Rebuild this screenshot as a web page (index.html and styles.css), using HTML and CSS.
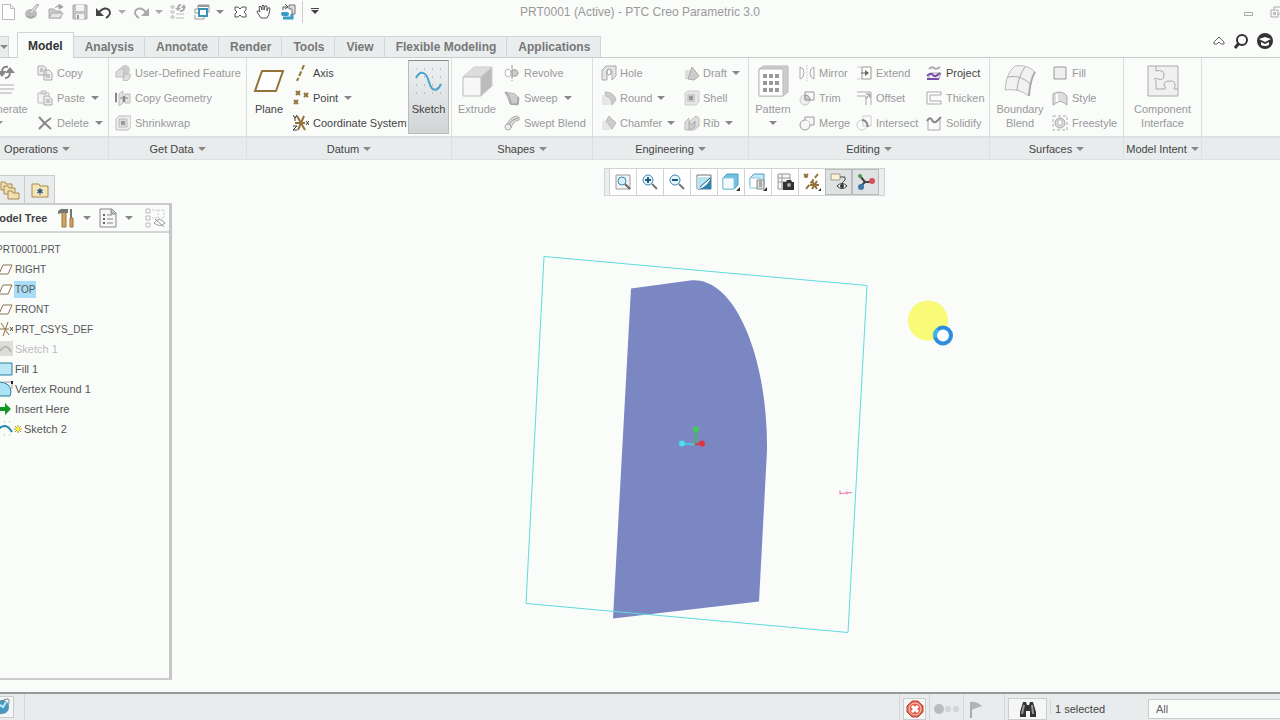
FILE: index.html
```html
<!DOCTYPE html>
<html lang="en">
<head>
    <meta charset="UTF-8">
    <meta name="viewport" content="width=device-width, initial-scale=1.0">
    <title>PRT0001 (Active) - PTC Creo Parametric 3.0</title>
    <link rel="stylesheet" href="styles.css">
</head>
<body>
    <!-- title bar -->
    <header class="titlebar">
        <div class="quick">
            <button aria-label="New"><svg width="16" height="16" viewBox="0 0 16 16"><path d="M2.500 .5h8l4 4v11h-12z" fill="#fff" stroke="#bbb"/><path d="M10.500 .5v4h4" fill="none" stroke="#bbb"/></svg></button>
            <button aria-label="Open last"><svg width="16" height="16" viewBox="0 0 16 16"><ellipse cx="7" cy="10" rx="6" ry="5" fill="#bbb"/><path d="M5 9l8-9 2 1-7 9z" fill="#ddd" stroke="#aaa"/><path d="M3 12q3 3 7 0" fill="none" stroke="#999"/></svg></button>
            <button aria-label="Open"><svg width="16" height="16" viewBox="0 0 16 16"><path d="M1 14V5h5l1 2h6v7z" fill="#ccc" stroke="#aaa"/><path d="M1 14l3-5h11l-3 5z" fill="#e4e4e4" stroke="#aaa"/><path d="M7 4q2-3 5-2M11 0l4 3-4 2z" fill="#999" stroke="#aaa"/></svg></button>
            <button aria-label="Save"><svg width="16" height="16" viewBox="0 0 16 16"><path d="M1 1h14v14H1z" fill="#c4c4c4" stroke="#aaa"/><path d="M4 1h8v6H4zM4 10h8v5H4z" fill="#f4f4f4"/><path d="M5 11h2v4H5z" fill="#999"/></svg></button>
            <button class="undo" aria-label="Undo"><svg width="16" height="16" viewBox="0 0 16 16"><path d="M3 8q6-6 10-2 3 4-3 8" fill="none" stroke="#444" stroke-width="2"/><path d="M0 4v8h8z" fill="#444"/></svg><i class="caret light"></i></button>
            <button class="undo" aria-label="Redo"><svg width="16" height="16" viewBox="0 0 16 16"><path d="M13 8Q7 2 3 6q-3 4 3 8" fill="none" stroke="#aaa" stroke-width="2"/><path d="M16 4v8H8z" fill="#aaa"/></svg><i class="caret light"></i></button>
            <button aria-label="Regenerate model"><svg width="16" height="16" viewBox="0 0 16 16"><path d="M1 2h3v2H1zM1 7h3v2H1zM1 12h3v2H1z" fill="none" stroke="#bbb"/><path d="M6 10h8M6 14h8" stroke="#bbb"/><path d="M11 1Q8 1 8 4M10 7q4 0 4-3" fill="none" stroke="#aaa" stroke-width="2"/><path d="M5 4h6L8 7zM11 4h5l-2-4z" fill="#aaa"/></svg></button>
            <button class="undo" aria-label="Windows"><svg width="16" height="16" viewBox="0 0 16 16"><path d="M1 5h3V1h11v7h-2M1 5v4h3M1 11v4h9v-2" fill="#fff" stroke="#999"/><path d="M4 2h11" stroke="#999" stroke-width="2"/><path d="M5 5h8v7H5z" fill="#fff" stroke="#3a92b8" stroke-width="2"/></svg><i class="caret"></i></button>
            <button class="wide" aria-label="Close"><svg width="16" height="16" viewBox="0 0 16 16"><path d="M3 3h3l2 2 2-2h4v3l-2 2 2 2v3h-4l-2-2-2 2H3v-3l2-2-2-2z" fill="#fff" stroke="#555"/></svg></button>
            <button class="wide" aria-label="Pan"><svg width="16" height="16" viewBox="0 0 16 16"><path d="M5 14L1 8q0-2 2-1l1 1-1-5q1-2 2 0l1 3V2q1-2 2 0v4l1-4q2-1 2 1v4l1-3q2-1 2 1-1 7-3 9z" fill="#fff" stroke="#555"/></svg></button>
            <button aria-label="Switch window"><svg width="16" height="16" viewBox="0 0 16 16"><path d="M9 1h6v9h-3V5H9z" fill="#ddd" stroke="#777"/><path d="M3 6V3h4M5 0l3 3-3 2" fill="none" stroke="#555"/><rect x="1" y="8" width="8" height="4" rx="2" fill="#3a9cc4"/><path d="M3 14h9v-4" fill="none" stroke="#3a9cc4" stroke-width="3"/></svg></button>
            <button class="more" aria-label="Customize toolbar"><i class="caret dark"></i></button>
        </div>
        <h1>PRT0001 (Active) - PTC Creo Parametric 3.0</h1>
        <div class="window-buttons">
            <button aria-label="Minimize"><svg width="10" height="12" viewBox="0 0 10 12"><path d="M.5 6.500h8v3h-8z" fill="none" stroke="#aaa"/></svg></button>
            <button aria-label="Restore"><svg width="12" height="12" viewBox="0 0 12 12"><path d="M4 4V1h8v7H8" fill="none" stroke="#aaa"/><path d="M1 4h7v7H1zM3.500 6.500h2v2h-2z" fill="none" stroke="#aaa"/></svg></button>
        </div>
    </header>

    <!-- ribbon tabs -->
    <nav class="tabs">
        <button class="file" aria-label="File"><i class="caret"></i></button>
        <button class="active">Model</button>
        <button>Analysis</button>
        <button>Annotate</button>
        <button>Render</button>
        <button>Tools</button>
        <button>View</button>
        <button>Flexible Modeling</button>
        <button>Applications</button>
        <div class="help">
            <button aria-label="Collapse ribbon"><svg width="12" height="10" viewBox="0 0 12 10"><path d="M1 6l5-5 5 5v2H8L6 6 4 8H1z" fill="#fff" stroke="#666"/></svg></button>
            <button aria-label="Search"><svg width="16" height="16" viewBox="0 0 16 16"><circle cx="9" cy="7" r="5" fill="none" stroke="#333" stroke-width="2"/><path d="M6 10l-4 5" stroke="#333" stroke-width="3"/></svg></button>
            <button aria-label="Learning"><svg width="16" height="16" viewBox="0 0 16 16"><circle cx="8" cy="8" r="8" fill="#333"/><path d="M2 6l6-2 6 2-6 3zM4 9l4 2 4-2v3q-4 2-8 0z" fill="#fff"/></svg></button>
        </div>
    </nav>

    <!-- ribbon -->
    <section class="ribbon">
        <div class="group operations">
            <div class="body">
                <button class="big off"><svg width="32" height="32" viewBox="0 0 32 32"><path d="M25 2q-6-1-6 5M22 13q5 0 5-6" fill="none" stroke="#888" stroke-width="2"/><path d="M14 6h10l-5 6zM22 8h10l-5-6z" fill="#888"/><path d="M4 20h27M4 24h27M4 28h25" stroke="#aaa"/></svg><span>Regenerate</span><i class="caret"></i></button>
                <div class="col">
                    <button class="off"><svg width="16" height="16" viewBox="0 0 16 16"><path d="M1 1h6l2 2v7H1zM7 5h5l3 3v7H7z" fill="#eee" stroke="#aaa"/><path d="M3 4h3M3 6h3M9 10h4M9 12h4" stroke="#999"/></svg>Copy</button>
                    <button class="off"><svg width="16" height="16" viewBox="0 0 16 16"><path d="M1 3h11v10H1zM4 1h5v3H4z" fill="#f4f4f4" stroke="#bbb"/><path d="M7 6h5l3 3v6H7z" fill="#eee" stroke="#aaa"/><path d="M9 10h4M9 12h4" stroke="#999"/></svg>Paste<i class="caret"></i></button>
                    <button class="off"><svg width="16" height="16" viewBox="0 0 16 16"><path d="M2 2q5 6 12 12M14 3Q8 7 2 14" fill="none" stroke="#888" stroke-width="2"/></svg>Delete<i class="caret"></i></button>
                </div>
            </div>
            <button class="foot">Operations<i class="caret"></i></button>
        </div>

        <div class="group getdata">
            <div class="body">
                <div class="col">
                    <button class="off"><svg width="16" height="16" viewBox="0 0 16 16"><circle cx="10" cy="5" r="5" fill="#ccc"/><path d="M1 7l3-3h5v8H1zM9 9h6v4l-3 3H8z" fill="#ddd" stroke="#bbb"/></svg>User-Defined Feature</button>
                    <button class="off"><svg width="16" height="16" viewBox="0 0 16 16"><path d="M1 2v11M4 4l4-3v12l-4 3zM10 4h5v9h-5z" fill="#e4e4e4" stroke="#bbb"/><path d="M1 3v9M9 6v6" stroke="#888" stroke-width="2"/><path d="M5 8h8" stroke="#888"/></svg>Copy Geometry</button>
                    <button class="off"><svg width="16" height="16" viewBox="0 0 16 16"><path d="M1 4l3-3h12v11l-3 3H1z" fill="#eee" stroke="#bbb"/><path d="M4 4h8v8H4z" fill="#ddd" stroke="#bbb"/><path d="M6 6h4v4H6z" fill="#999"/></svg>Shrinkwrap</button>
                </div>
            </div>
            <button class="foot">Get Data<i class="caret"></i></button>
        </div>

        <div class="group datum">
            <div class="body">
                <button class="big"><svg width="32" height="32" viewBox="0 0 32 32"><path d="M9 6h21l-7 20H2z" fill="#fff" stroke="#94733a" stroke-width="2"/></svg><span>Plane</span></button>
                <div class="col">
                    <button><svg width="16" height="16" viewBox="0 0 16 16"><path d="M11 0L4 16" stroke="#94733a" stroke-width="2" stroke-dasharray="5 2"/></svg>Axis</button>
                    <button><svg width="16" height="16" viewBox="0 0 16 16"><path d="M3 1l4 4M7 1L3 5M11 3l4 4M15 3l-4 4M1 10l4 4M5 10l-4 4" stroke="#94733a" stroke-width="2"/></svg>Point<i class="caret"></i></button>
                    <button><svg width="16" height="16" viewBox="0 0 16 16"><path d="M4 1l8 14M11 1L5 15M2 8h10" stroke="#94733a" stroke-width="2"/><path d="M0 0l2 3 2-3M2 3v3M0 11h4l-4 4h4M13 6l3 4M16 6l-3 4" fill="none" stroke="#333"/></svg>Coordinate System</button>
                </div>
                <button class="big pressed"><svg width="32" height="32" viewBox="0 0 32 32"><path d="M3 4h28M3 12h28M3 20h28M3 28h28" stroke="#999" stroke-dasharray="1 7"/><path d="M3 13C7 5 13 6 16 17S25 26 28 19" fill="none" stroke="#49a3cb" stroke-width="2"/></svg><span>Sketch</span></button>
            </div>
            <button class="foot">Datum<i class="caret"></i></button>
        </div>

        <div class="group shapes">
            <div class="body">
                <button class="big off"><svg width="32" height="32" viewBox="0 0 32 32"><path d="M2 12L13 2h18L20 12z" fill="#ddd" stroke="#ccc"/><path d="M20 12L31 2v19L20 31z" fill="#bbb" stroke="#ccc"/><path d="M2 12h18v19H2z" fill="#f7f7f7" stroke="#bbb"/></svg><span>Extrude</span></button>
                <div class="col">
                    <button class="off"><svg width="16" height="16" viewBox="0 0 16 16"><path d="M8 0v16" stroke="#999" stroke-dasharray="4 1"/><ellipse cx="4" cy="8" rx="3" ry="4" fill="none" stroke="#bbb"/><path d="M8 5q6-1 6 3t-6 3z" fill="#ccc" stroke="#999"/></svg>Revolve</button>
                    <button class="off"><svg width="16" height="16" viewBox="0 0 16 16"><path d="M1 2l10 2 4 4-1 7-8-1-2-6z" fill="#ddd" stroke="#aaa"/><path d="M1 2q5 3 6 12h7V7" fill="#ccc" stroke="#999"/></svg>Sweep<i class="caret"></i></button>
                    <button class="off"><svg width="16" height="16" viewBox="0 0 16 16"><path d="M2 11Q5 3 12 1q4 0 3 4-6 1-8 8-3 3-5-2z" fill="#ddd" stroke="#aaa"/><ellipse cx="4" cy="12" rx="3" ry="3" fill="#eee" stroke="#aaa"/><path d="M5 9q3-5 9-6" fill="none" stroke="#999"/></svg>Swept Blend</button>
                </div>
            </div>
            <button class="foot">Shapes<i class="caret"></i></button>
        </div>

        <div class="group engineering">
            <div class="body">
                <div class="col">
                    <button class="off"><svg width="16" height="16" viewBox="0 0 16 16"><path d="M1 5l4-4h10v10l-4 4V6q-3-3-5 0v9H1z" fill="#e4e4e4" stroke="#aaa"/><ellipse cx="8" cy="7" rx="2" ry="3" fill="#fff" stroke="#999"/></svg>Hole</button>
                    <button class="off"><svg width="16" height="16" viewBox="0 0 16 16"><path d="M1 5h6q6 2 6 9l-6 1H1z" fill="#e6e6e6"/><path d="M4 2q9 0 11 8l-4 5q0-8-6-9z" fill="#ccc" stroke="#bbb"/></svg>Round<i class="caret"></i></button>
                    <button class="off"><svg width="16" height="16" viewBox="0 0 16 16"><path d="M1 6h5l5 6v3H1z" fill="#e6e6e6"/><path d="M8 1l7 7-4 6-6-8z" fill="#ccc" stroke="#bbb"/></svg>Chamfer<i class="caret"></i></button>
                </div>
                <div class="col">
                    <button class="off"><svg width="16" height="16" viewBox="0 0 16 16"><path d="M1 5h6v9H1z" fill="#ddd"/><path d="M4 14l4-12 7 9-5 4z" fill="#ccc" stroke="#aaa"/></svg>Draft<i class="caret"></i></button>
                    <button class="off"><svg width="16" height="16" viewBox="0 0 16 16"><path d="M1 3l3-2h11v11l-3 3H1z" fill="#e6e6e6" stroke="#ccc"/><path d="M4 5h6v6H4z" fill="#999" stroke="#ccc" stroke-width="2"/></svg>Shell</button>
                    <button class="off"><svg width="16" height="16" viewBox="0 0 16 16"><path d="M1 7l4-4v4l7-6 3 2v8l-5 4H1z" fill="#ddd" stroke="#bbb"/><path d="M5 7q3 5 6-1v6l-6 3z" fill="#ccc" stroke="#aaa"/></svg>Rib<i class="caret"></i></button>
                </div>
            </div>
            <button class="foot">Engineering<i class="caret"></i></button>
        </div>

        <div class="group editing">
            <div class="body">
                <button class="big off"><svg width="32" height="32" viewBox="0 0 32 32"><path d="M2 4l4-3h25v26l-5 4H2z" fill="#ccc" stroke="#bbb"/><path d="M2 4h24v27H2z" fill="#fff" stroke="#bbb"/><path d="M6 11h16M6 18h16M6 25h16" stroke="#999" stroke-width="4" stroke-dasharray="4 2"/></svg><span>Pattern</span><i class="caret"></i></button>
                <div class="col">
                    <button class="off"><svg width="16" height="16" viewBox="0 0 16 16"><path d="M8 0v16" stroke="#ccc" stroke-dasharray="2 1"/><path d="M1 2q4 1 4 6t-4 6zM15 2q-4 1-4 6t4 6z" fill="none" stroke="#aaa"/></svg>Mirror</button>
                    <button class="off"><svg width="16" height="16" viewBox="0 0 16 16"><circle cx="6" cy="10" r="5" fill="#eee" stroke="#ccc"/><path d="M6 2h9v8H6z" fill="none" stroke="#999"/><path d="M6 5q5 0 5 5H6z" fill="#ccc" stroke="#999"/></svg>Trim</button>
                    <button class="off"><svg width="16" height="16" viewBox="0 0 16 16"><path d="M6 5V2h9v8h-4A5 5 0 1 1 6 5z" fill="#f7f7f7" stroke="#999"/><path d="M6 5q5 0 5 5" fill="none" stroke="#ccc"/></svg>Merge</button>
                </div>
                <div class="col">
                    <button class="off"><svg width="16" height="16" viewBox="0 0 16 16"><path d="M1 2h5M1 14h5" stroke="#ccc"/><path d="M6 2h9v12H6z" fill="none" stroke="#999"/><path d="M5 8h4" stroke="#666"/><path d="M9 5l4 3-4 3z" fill="#666"/></svg>Extend</button>
                    <button class="off"><svg width="16" height="16" viewBox="0 0 16 16"><path d="M1 2h14v13M1 6h9v9" fill="none" stroke="#aaa"/><path d="M10 9l3-4M10 4h4v4" fill="none" stroke="#888"/></svg>Offset</button>
                    <button class="off"><svg width="16" height="16" viewBox="0 0 16 16"><path d="M7 1h8v10H7z" fill="none" stroke="#ccc"/><circle cx="6" cy="10" r="5" fill="none" stroke="#ccc"/><path d="M6 5q5 0 6 7" fill="none" stroke="#888" stroke-width="2"/></svg>Intersect</button>
                </div>
                <div class="col">
                    <button><svg width="16" height="16" viewBox="0 0 16 16"><path d="M3 4q3-3 5-1t6-1" fill="none" stroke="#aaa" stroke-width="2"/><path d="M2 14l3-6h10l-2 6z" fill="#f1edf7" stroke="#aaa"/><path d="M1 11q4-4 6-1t7-2M1 14h12" fill="none" stroke="#7650a8" stroke-width="2"/></svg>Project</button>
                    <button class="off"><svg width="16" height="16" viewBox="0 0 16 16"><path d="M15 2H1v12h14v-3H4V5h11z" fill="#fff" stroke="#aaa"/></svg>Thicken</button>
                    <button class="off"><svg width="16" height="16" viewBox="0 0 16 16"><path d="M2 6v9h12V4" fill="none" stroke="#aaa"/><path d="M1 6q3-5 5-1t5 1l4-4" fill="none" stroke="#888" stroke-width="2"/></svg>Solidify</button>
                </div>
            </div>
            <button class="foot">Editing<i class="caret"></i></button>
        </div>

        <div class="group surfaces">
            <div class="body">
                <button class="big off"><svg width="32" height="32" viewBox="0 0 32 32"><path d="M11 1q12-2 20 6-5 8-6 24-10-8-24-6Q2 8 11 1z" fill="#f1f1f1" stroke="#bbb"/><path d="M21 2q-7 10-8 23M4 12q13-3 23 8" fill="none" stroke="#aaa"/><path d="M31 7q-5 8-6 24" fill="none" stroke="#aaa" stroke-width="2"/></svg><span>Boundary<br>Blend</span></button>
                <div class="col">
                    <button class="off"><svg width="16" height="16" viewBox="0 0 16 16"><path d="M2 2h12v12H2z" fill="#eee" stroke="#999"/></svg>Fill</button>
                    <button class="off"><svg width="16" height="16" viewBox="0 0 16 16"><path d="M1 4q6-4 12 0l2 2v9q-6-5-9-3t-5 3z" fill="#ddd" stroke="#aaa"/><path d="M5 4v8" stroke="#fff" stroke-width="2"/></svg>Style</button>
                    <button class="off"><svg width="16" height="16" viewBox="0 0 16 16"><path d="M1 1h14v14H1z" fill="none" stroke="#aaa" stroke-dasharray="3 2"/><circle cx="8" cy="8" r="5" fill="#ddd" stroke="#aaa"/><path d="M6 5h4v5H6z" fill="#fff" stroke="#bbb"/></svg>Freestyle</button>
                </div>
            </div>
            <button class="foot">Surfaces<i class="caret"></i></button>
        </div>

        <div class="group intent">
            <div class="body">
                <button class="big off"><svg width="32" height="32" viewBox="0 0 32 32"><path d="M1 1h30v30H1z" fill="#f0f0f0" stroke="#aaa"/><path d="M9 1v5q8-2 8 4t-6 4-2 2v8h9q1-2-1-4 0-4 6-4t5 5l-1 3h4" fill="none" stroke="#aaa"/></svg><span>Component<br>Interface</span></button>
            </div>
            <button class="foot">Model Intent<i class="caret"></i></button>
        </div>
        <div class="rest"></div>
    </section>

    <main>
        <aside>
            <div class="side-tabs">
                <button aria-label="Folder browser"><svg width="20" height="20" viewBox="0 0 20 20"><g fill="#f2dfae" stroke="#a88a54"><path d="M1 10V2h4l1 2h6v6z"/><path d="M4 14V6h4l1 2h6v6z"/><path d="M8 19v-8h4l1 2h6v6z"/></g></svg></button>
                <button aria-label="Favorites"><svg width="20" height="20" viewBox="0 0 20 20"><path d="M2 17V4h7l1 2h8v11z" fill="#f7e5b8" stroke="#a88a54"/><path d="M10 8v7M7 10l6 3M13 10l-6 3" stroke="#27618a"/><circle cx="10" cy="11" r="2" fill="#27618a"/></svg></button>
            </div>
            <div class="panel">
                <div class="panel-head">
                    <h2>Model Tree</h2>
                    <button aria-label="Settings"><svg width="18" height="20" viewBox="0 0 18 20"><path d="M5 4h4v15H5z" fill="#d3a75f" stroke="#997440"/><path d="M1 3q3-3 6-2h4v4H5L1 6z" fill="#777"/><path d="M14 1v9" stroke="#777" stroke-width="2"/><path d="M13 10h3v9h-3z" fill="#d3a75f" stroke="#997440"/></svg><i class="caret"></i></button>
                    <button aria-label="Show"><svg width="18" height="20" viewBox="0 0 18 20"><path d="M1 1h12l4 4v14H1z" fill="#f5f6f6" stroke="#888"/><path d="M12 1v5h5" fill="#bbb" stroke="#888"/><path d="M4 7h2M4 11h2M4 15h2" stroke="#666" stroke-width="2"/><path d="M8 7h5M8 11h6M8 15h6" stroke="#888"/></svg><i class="caret"></i></button>
                    <button class="hide-btn" aria-label="Hide items"><svg width="20" height="20" viewBox="0 0 20 20"><path d="M1 1h4v4H1zM1 8h4v4H1zM1 15h4v4H1z" fill="none" stroke="#bbb"/><path d="M7 2h12v8H7M13 2v8" fill="none" stroke="#ccc" stroke-dasharray="2 1"/><path d="M9 15q5-7 11 0-5 5-11 0zM10 11l9 8" fill="none" stroke="#999"/></svg></button>
                </div>
                <ul class="tree">
                    <li class="root datum-name"><span>PRT0001.PRT</span></li>
                    <li class="datum-name"><svg width="16" height="16" viewBox="0 0 16 16"><path d="M6 4h9l-4 9H2z" fill="#fff" stroke="#86744f"/></svg><span>RIGHT</span></li>
                    <li class="datum-name"><svg width="16" height="16" viewBox="0 0 16 16"><path d="M6 4h9l-4 9H2z" fill="#fff" stroke="#86744f"/></svg><span class="selected">TOP</span></li>
                    <li class="datum-name"><svg width="16" height="16" viewBox="0 0 16 16"><path d="M6 4h9l-4 9H2z" fill="#fff" stroke="#86744f"/></svg><span>FRONT</span></li>
                    <li class="datum-name"><svg width="16" height="16" viewBox="0 0 16 16"><path d="M4 2l8 12M11 1L6 15M2 8h10" stroke="#94733a"/><path d="M13 6l3 4M16 6l-3 4" stroke="#444"/></svg><span>PRT_CSYS_DEF</span></li>
                    <li class="hidden-item"><svg width="16" height="16" viewBox="0 0 16 16"><path d="M0 0h16v15H0z" fill="#dddeda"/><path d="M3 10q6-9 11 1" fill="none" stroke="#b7b7ad" stroke-width="2"/></svg><span>Sketch 1</span></li>
                    <li><svg width="16" height="16" viewBox="0 0 16 16"><path d="M2 2h13v12H2z" fill="#bde7f5" stroke="#267c9c"/></svg><span>Fill 1</span></li>
                    <li><svg width="16" height="16" viewBox="0 0 16 16"><path d="M1 1h2q11 1 11 10l-1 4H1z" fill="#a9e3f4" stroke="#247b9b"/><path d="M7 1h8v7" fill="none" stroke="#999"/><path d="M15 0v3" stroke="#222" stroke-width="2"/></svg><span>Vertex Round 1</span></li>
                    <li><svg width="16" height="16" viewBox="0 0 16 16"><path d="M1 6h7V2l6 6-6 6v-4H1z" fill="#159522"/></svg><span>Insert Here</span></li>
                    <li><svg width="16" height="16" viewBox="0 0 16 16"><path d="M2 1h14M2 6h14M2 14h14" stroke="#aaa" stroke-dasharray="1 4"/><path d="M1 9q7-9 14 2" fill="none" stroke="#278cab" stroke-width="2"/></svg><svg width="8" height="8" viewBox="0 0 8 8"><path d="M4 0v8M0 4h8M1 1l6 6M7 1L1 7" stroke="#a49b20"/><circle cx="4" cy="4" r="2" fill="#f6f13a"/></svg><span>Sketch 2</span></li>
                </ul>
            </div>
        </aside>

        <section class="viewport">
            <div class="view-tools">
                <button aria-label="Refit"><svg width="18" height="18" viewBox="0 0 18 18"><path d="M2 2h14v14H2z" fill="#f5f5f5" stroke="#999"/><circle cx="8" cy="8" r="4" fill="#d8effa" stroke="#398bb1"/><path d="M11 11l5 5" stroke="#666" stroke-width="2"/></svg></button>
                <button aria-label="Zoom in"><svg width="18" height="18" viewBox="0 0 18 18"><circle cx="7" cy="7" r="5" fill="#e3f4fb" stroke="#398bb1"/><path d="M4 7h6M7 4v6" stroke="#255b78" stroke-width="2"/><path d="M11 11l5 5" stroke="#777" stroke-width="2"/></svg></button>
                <button aria-label="Zoom out"><svg width="18" height="18" viewBox="0 0 18 18"><circle cx="7" cy="7" r="5" fill="#e3f4fb" stroke="#398bb1"/><path d="M4 7h6" stroke="#255b78" stroke-width="2"/><path d="M11 11l5 5" stroke="#777" stroke-width="2"/></svg></button>
                <button aria-label="Repaint"><svg width="18" height="18" viewBox="0 0 18 18"><path d="M2 2h14v14H2z" fill="#fff" stroke="#777"/><path d="M2 4h14L4 16H2z" fill="#bce3f3"/><path d="M16 3v13H4q10-3 12-13z" fill="#2c83ad"/><path d="M5 14l10-9" stroke="#265e7c"/></svg></button>
                <button aria-label="Display style"><svg width="18" height="18" viewBox="0 0 18 18"><path d="M1 5l4-4h11v11l-4 4H1z" fill="#71c1df" stroke="#4a9fbe"/><path d="M1 5h11v11H1z" fill="#f3fbfe" stroke="#8cc7dc"/><path d="M18 14v4h-4z" fill="#333"/></svg></button>
                <button aria-label="Saved orientations"><svg width="18" height="18" viewBox="0 0 18 18"><path d="M1 5l4-4h10v11H1z" fill="#c6e9f5" stroke="#4a9fbe"/><path d="M1 5h10v10H1z" fill="#fff" stroke="#8cc7dc"/><path d="M8 7h7v9H8z" fill="#ddd" stroke="#888"/><path d="M10 9h3M10 11h3M10 13h3" stroke="#777"/><path d="M18 14v4h-4z" fill="#333"/></svg></button>
                <button aria-label="View manager"><svg width="18" height="18" viewBox="0 0 18 18"><path d="M2 1h12v15H2zM2 5h12M2 9h8M6 1v15" fill="#f5f5f5" stroke="#999"/><path d="M7 9h3l1-2h4l1 2h2v8H7z" fill="#333"/><circle cx="13" cy="12" r="2" fill="#aaa"/></svg></button>
                <button aria-label="Datum display"><svg width="18" height="18" viewBox="0 0 18 18"><path d="M1 1l4 4M5 1L1 5M15 1L3 16" stroke="#94733a" stroke-width="2" stroke-dasharray="5 2"/><path d="M9 8l5 8M14 8l-5 8M7 12h9" stroke="#94733a" stroke-width="2"/><path d="M18 15v3h-3z" fill="#333"/></svg></button>
                <button class="on" aria-label="Annotation display"><svg width="18" height="18" viewBox="0 0 18 18"><path d="M1 1h9v6H1z" fill="#fff4d1" stroke="#999"/><path d="M10 4h5v3l-3 3" fill="none" stroke="#444"/><path d="M7 13q5-5 10 0-5 5-10 0z" fill="#fff" stroke="#333"/><circle cx="12" cy="13" r="2" fill="#333"/></svg></button>
                <button class="on" aria-label="Spin center"><svg width="18" height="18" viewBox="0 0 18 18"><path d="M8 9L3 3M8 9h7M8 9l-5 5" stroke="#444" stroke-width="2"/><circle cx="3" cy="3" r="2" fill="#4c9c4e"/><circle cx="15" cy="8" r="3" fill="#d35355"/><circle cx="4" cy="14" r="3" fill="#397ca5"/></svg></button>
            </div>
            <svg class="model" viewBox="172 200 1108 490">
                <path d="M631 288L690 280C736 275 768 360 767 450L759 601L613 618z" fill="#7b87c2"/>
                <path d="M544 256L867 285L848 632L526 603z" fill="none" stroke="#5fdbe0"/>
                <path d="M695 444l-13-1" stroke="#48c8e8" stroke-width="2"/>
                <path d="M695 444l1-14" stroke="#43b65c" stroke-width="2"/>
                <path d="M695 444l7-1" stroke="#d53743" stroke-width="2"/>
                <circle cx="682" cy="443" r="3" fill="#48dff2"/>
                <circle cx="696" cy="429" r="3" fill="#46c85b"/>
                <circle cx="702" cy="443" r="3" fill="#e23242"/>
                <path d="M840 490v4M840 493l12-1M847 491v3" stroke="#e574b2"/>
                <circle cx="928" cy="320" r="20" fill="#f9fa78"/>
                <circle cx="943" cy="335" r="8" fill="#fff" stroke="#2f8ddd" stroke-width="4"/>
                <path d="M935 337a8 8 0 0 1 3-8" fill="none" stroke="#3fb9e8" stroke-width="4"/>
            </svg>
        </section>
    </main>

    <footer class="status">
        <button class="web" aria-label="Browser"><svg width="18" height="18" viewBox="0 0 18 18"><circle cx="9" cy="9" r="7" fill="#3a9ccb"/><path d="M4 12l3-5 3 2 3-5" fill="none" stroke="#bfe6f6" stroke-width="2"/><ellipse cx="9" cy="9" rx="10" ry="4" transform="rotate(-50 9 9)" fill="none" stroke="#888"/></svg></button>
        <div class="message"></div>
        <div class="cell"><button class="stop" aria-label="Stop"><svg width="18" height="18" viewBox="0 0 18 18"><path d="M6 1h6l5 5v6l-5 5H6l-5-5V6z" fill="#e2604c" stroke="#b54638"/><circle cx="9" cy="9" r="6" fill="none" stroke="#fbd3ca"/><path d="M6 6l6 6M12 6l-6 6" stroke="#fff" stroke-width="3"/></svg></button></div>
        <div class="cell lights"><svg width="26" height="12" viewBox="0 0 26 12"><circle cx="6" cy="6" r="5" fill="#b9bcbc"/><circle cx="15" cy="6" r="3" fill="#d2d5d5"/><circle cx="23" cy="6" r="3" fill="#d2d5d5"/></svg></div>
        <div class="cell flag"><svg width="14" height="18" viewBox="0 0 14 18"><path d="M2 2v16" stroke="#aaa" stroke-width="2"/><path d="M2 2q5-1 11 4L2 10z" fill="#b2b5b5"/></svg></div>
        <div class="cell"><button class="find" aria-label="Find"><svg width="18" height="16" viewBox="0 0 18 16"><path d="M4 1h3l1 3h2l1-3h3l3 10v5h-6v-6H7v6H1v-5z" fill="#333"/><path d="M5 4L3 13M13 4l1 9" stroke="#999" stroke-width="2"/></svg></button></div>
        <span class="count">1 selected</span>
        <select aria-label="Selection filter"><option>All</option></select>
    </footer>
</body>
</html>
```
FILE: styles.css
```css
* { box-sizing: border-box; }
body { margin: 0; height: 100vh; display: flex; flex-direction: column; overflow: hidden; background: #fafcfa; color: #444; font-family: "Liberation Sans", Arial, sans-serif; font-size: 11px; }
button { padding: 0; border: none; background: none; color: inherit; font: inherit; cursor: pointer; }
svg { flex: none; display: block; }
h1, h2, ul { margin: 0; padding: 0; }
.caret { flex: none; border: 4px solid transparent; border-top-color: #888; border-bottom: none; }
.caret.light { border-top-color: #aaa; }
.caret.dark { border-top-color: #444; }

/* title bar */
.titlebar { flex: none; height: 24px; display: grid; grid-template-columns: 1fr auto 1fr; align-items: center; }
.titlebar h1 { font-size: 12px; font-weight: normal; color: #999; }
.quick, .window-buttons { display: flex; align-items: center; }
.quick button { width: 24px; height: 22px; display: flex; align-items: center; }
.quick .undo { width: 37px; gap: 6px; }
.quick .undo:nth-child(8) { width: 38px; }
.quick .more { border-left: 1px solid #ccc; padding-left: 8px; margin-left: -2px; }
.more .caret { position: relative; }
.more .caret::before { content: ""; position: absolute; left: -4px; top: -6px; width: 8px; height: 1px; background: #444; }
.window-buttons { justify-content: flex-end; gap: 16px; overflow: hidden; }
.window-buttons button:last-child { margin-right: -2px; }

/* ribbon tabs */
.tabs { flex: none; height: 34px; display: flex; align-items: flex-end; border-bottom: 1px solid #ccc; }
.tabs > button { height: 21px; padding: 0 10px 0 11px; border: 1px solid #d2d5d5; border-width: 1px 1px 0 0; background: #eaeded; color: #777; font-size: 12px; font-weight: bold; }
.tabs > .active { height: 26px; margin-bottom: -1px; padding: 0 10px; border-left-width: 1px; background: #fafcfa; color: #333; }
.tabs > .file { width: 9px; margin-right: 8px; padding: 0; display: flex; justify-content: center; align-items: center; overflow: hidden; }
.help { align-self: flex-start; display: flex; align-items: center; gap: 8px; height: 33px; margin-left: auto; padding-right: 7px; }

/* ribbon */
.ribbon { flex: none; height: 102px; display: flex; border-bottom: 1px solid #dde0e0; }
.group { flex: none; display: flex; flex-direction: column; border-right: 1px solid #dcdfdf; overflow: hidden; }
.group .body { height: 78px; display: grid; padding-top: 2px; }
.col { padding-left: 6px; }
.col button { display: flex; align-items: center; gap: 4px; height: 25px; white-space: nowrap; }
.col .caret { margin-left: 2px; }
.off { color: #999; }
.big { display: flex; flex-direction: column; align-items: center; height: 74px; padding-top: 5px; line-height: 14px; }
.big svg { margin-bottom: 5px; }
.big .caret { margin-top: 5px; }
.big.pressed { border: 1px solid #bbb; border-top: 1px solid #888; padding-top: 4px; background: linear-gradient(#eef1f1, #d2d5d6); }
.foot { flex: 1; display: flex; align-items: center; justify-content: center; gap: 4px; border-top: 2px solid #dde1e1; background: #e9ecec; }
.rest { flex: 1; display: flex; flex-direction: column; background: #e9ecec; }
.rest::before { content: ""; height: 78px; border-bottom: 2px solid #dde1e1; background: #fafcfa; }

.operations { width: 109px; }
.operations .body { grid-template-columns: 64px 77px; justify-content: end; }
.operations .foot { padding-right: 34px; }
.getdata { width: 138px; }
.datum { width: 205px; }
.datum .body { grid-template-columns: 40px 119px 41px; padding-left: 2px; }
.datum .col { padding-left: 4px; }
.shapes { width: 141px; }
.shapes .body { grid-template-columns: 46px 90px; padding-left: 2px; }
.shapes .col { padding-left: 4px; }
.engineering { width: 156px; }
.engineering .body { grid-template-columns: 83px 69px; }
.engineering .col { padding-left: 8px; }
.engineering .col button { gap: 3px; }
.editing { width: 241px; }
.editing .body { grid-template-columns: 46px 57px 70px 60px; padding-left: 1px; }
.editing .col { padding-left: 3px; }
.surfaces { width: 134px; }
.surfaces .body { grid-template-columns: 56px 76px; padding-left: 2px; }
.surfaces .col { padding-left: 4px; }
.intent { width: 78px; }

/* model tree */
main { flex: 1; min-height: 0; display: flex; }
aside { flex: none; width: 188px; margin: 15px 0 12px -16px; display: flex; flex-direction: column; }
.side-tabs { display: flex; }
.side-tabs button { width: 30px; height: 28px; display: flex; align-items: center; justify-content: center; border: 1px solid #ccc; border-width: 1px 1px 0 0; background: #e9ecec; }
.side-tabs button:first-child { width: 41px; padding-left: 12px; }
.panel { flex: 1; border: 2px solid #ccc; border-right: 3px solid #c6c8c8; }
.panel-head { height: 28px; display: flex; align-items: center; gap: 8px; padding-left: 4px; border-bottom: 2px solid #d4d6d6; }
.panel-head h2 { font-size: 11px; width: 59px; white-space: nowrap; }
.panel-head button { display: flex; align-items: center; gap: 8px; }
.panel-head .hide-btn { margin-left: 4px; }
.tree { list-style: none; padding-top: 6px; color: #555; }
.tree li { height: 20px; display: flex; align-items: center; gap: 1px; padding-left: 11px; }
.tree span { padding: 2px 1px; line-height: 13px; }
.tree .datum-name { font-size: 10px; }
.tree .root { padding-left: 9px; }
.tree .selected { background: #a9dcf5; }
.tree .hidden-item { color: #bbb; }

/* graphics area */
.viewport { flex: 1; min-width: 0; display: flex; flex-direction: column; }
.view-tools { align-self: flex-start; height: 28px; margin: 8px 0 3px 39%; padding: 0 5px 0 4px; display: flex; background: #eceeee; border: 1px solid #d0d3d3; }
.view-tools button { width: 27px; display: flex; align-items: center; justify-content: center; border-left: 1px solid #d0d3d3; background: #fff; }
.view-tools button:last-child { border-right: 1px solid #bbb; }
.view-tools .on { background: #dfe2e3; border: 1px solid #bbb; }
.model { flex: 1; min-height: 0; width: 100%; }

/* status bar */
.status { flex: none; height: 28px; display: flex; align-items: center; border-top: 2px solid #999; background: #e9ecec; }
.status button { display: flex; align-items: center; justify-content: center; height: 22px; border: 1px solid #ccc; background: #f5f6f6; }
.status .web { width: 25px; margin-left: -11px; margin-right: 10px; }
.message { flex: 1; align-self: stretch; border-left: 1px solid #d4d7d7; }
.cell { align-self: stretch; display: flex; align-items: center; padding: 3px 3px 0; border-left: 1px solid #d4d7d7; }
.status .stop { width: 23px; }
.lights { width: 34px; }
.flag { width: 41px; padding-left: 5px; }
.status .find { width: 39px; }
.count { width: 98px; padding: 3px 0 0 4px; border-left: 1px solid #d4d7d7; }
.status select { width: 156px; height: 20px; margin: 3px -24px 0 0; padding: 0 3px; border: 1px solid #ccc; background: #fafcfa; color: #666; font: inherit; }
```
